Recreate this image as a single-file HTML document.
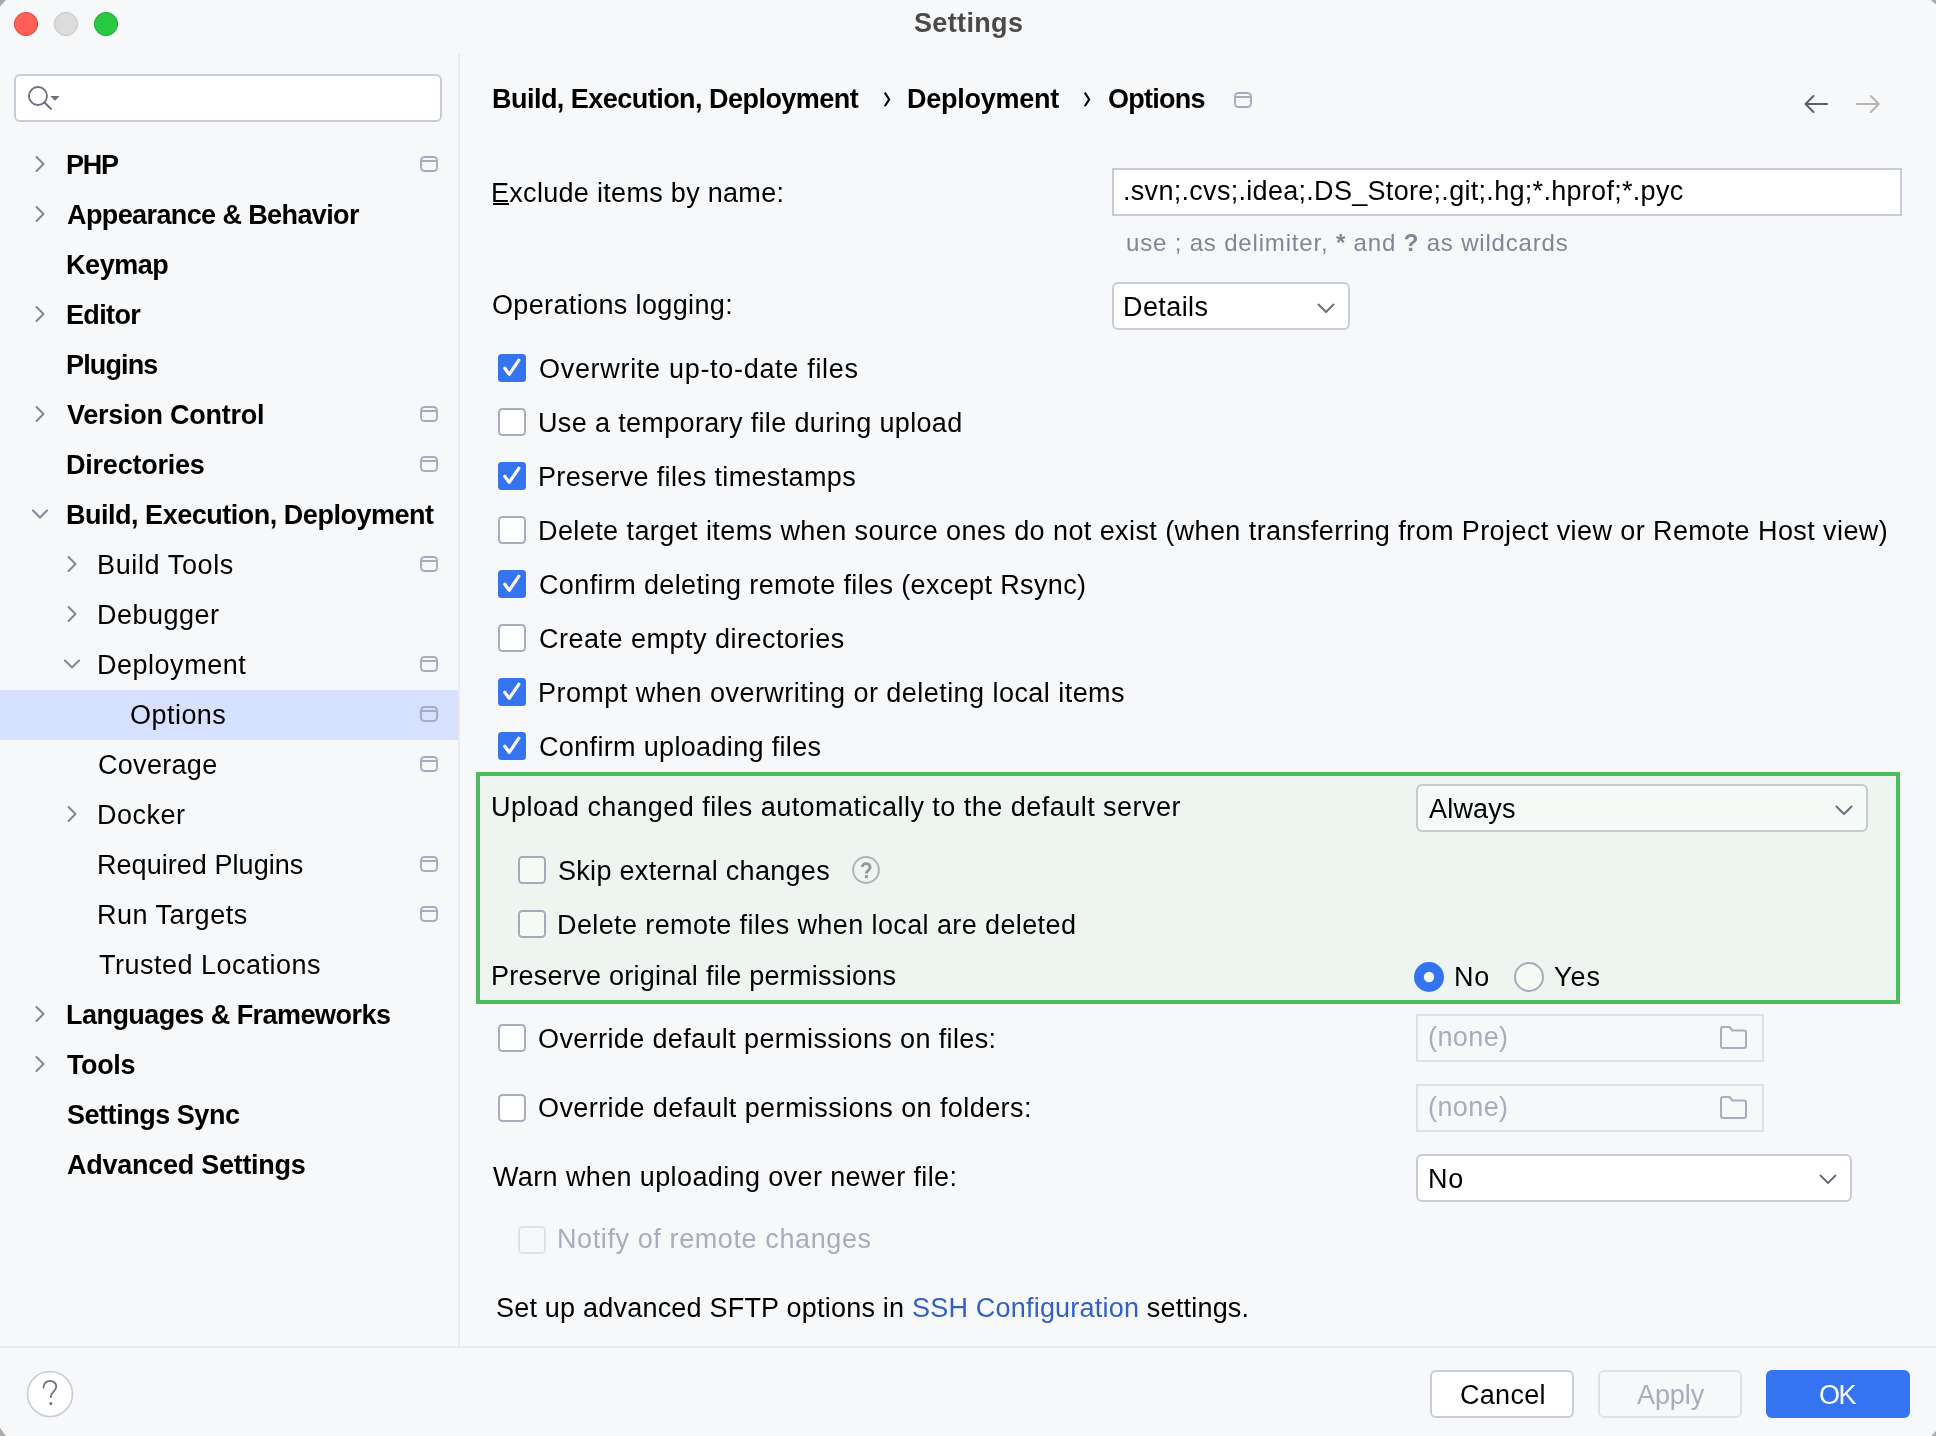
<!DOCTYPE html><html><head><meta charset="utf-8"><style>
html,body{margin:0;padding:0;}
body{width:1936px;height:1436px;position:relative;overflow:hidden;background:#F7F8FA;font-family:"Liberation Sans", sans-serif;}
.t{position:absolute;white-space:pre;line-height:normal;will-change:transform;}
</style></head><body>
<svg style="position:absolute;left:0px;top:0px" width="8" height="8" viewBox="0 0 8 8"><path d="M0 0 L6 0 L0 6.5 Z" fill="#ababab"/></svg>
<svg style="position:absolute;left:1928px;top:0px" width="8" height="8" viewBox="0 0 8 8"><path d="M2.5 0 L8 0 L8 4.5 Z" fill="#ababab"/></svg>
<svg style="position:absolute;left:0px;top:1428px" width="8" height="8" viewBox="0 0 8 8"><path d="M0 0 L6 8 L0 8 Z" fill="#ababab"/></svg>
<svg style="position:absolute;left:1928px;top:1428px" width="8" height="8" viewBox="0 0 8 8"><path d="M8 3 L8 8 L3.5 8 Z" fill="#ababab"/></svg>
<svg style="position:absolute;left:13px;top:11px" width="26" height="26" viewBox="0 0 26 26"><circle cx="13" cy="13" r="11.6" fill="#FF5F57" stroke="#E2463F" stroke-width="1"/></svg>
<svg style="position:absolute;left:53px;top:11px" width="26" height="26" viewBox="0 0 26 26"><circle cx="13" cy="13" r="11.6" fill="#DCDCDC" stroke="#C6C6C6" stroke-width="1"/></svg>
<svg style="position:absolute;left:93px;top:11px" width="26" height="26" viewBox="0 0 26 26"><circle cx="13" cy="13" r="11.6" fill="#28C840" stroke="#1EAA32" stroke-width="1"/></svg>
<div style="position:absolute;left:458px;top:54px;width:2px;height:1292px;box-sizing:border-box;background:#EAEBEF"></div>
<div style="position:absolute;left:0px;top:1346px;width:1936px;height:2px;box-sizing:border-box;background:#EAEBEF"></div>
<div style="position:absolute;left:14px;top:74px;width:428px;height:48px;box-sizing:border-box;background:#FFFFFF;border:2px solid #C9CCD6;border-radius:6px"></div>
<svg style="position:absolute;left:24px;top:82px" width="40" height="32" viewBox="0 0 40 32"><circle cx="14" cy="14" r="9" fill="none" stroke="#6C707E" stroke-width="1.8"/><line x1="20.5" y1="20.5" x2="27" y2="27" stroke="#6C707E" stroke-width="1.9" stroke-linecap="round"/><path d="M26.3 14.1 L35.7 14.1 L31 18.8 Z" fill="#6C707E"/></svg>
<div style="position:absolute;left:0px;top:690px;width:458px;height:50px;box-sizing:border-box;background:#D5E1FF"></div>
<svg style="position:absolute;left:31.5px;top:154px" width="16" height="20" viewBox="0 0 16 20"><path d="M4.5 3 L11.5 10 L4.5 17" fill="none" stroke="#818594" stroke-width="2" stroke-linecap="round" stroke-linejoin="round"/></svg>
<svg style="position:absolute;left:420px;top:156px" width="18" height="16" viewBox="0 0 18 16"><rect x="1" y="1" width="16" height="14" rx="3.5" fill="none" stroke="#A8ADBD" stroke-width="2"/><line x1="1" y1="5" x2="17" y2="5" stroke="#A8ADBD" stroke-width="2"/></svg>
<svg style="position:absolute;left:31.5px;top:204px" width="16" height="20" viewBox="0 0 16 20"><path d="M4.5 3 L11.5 10 L4.5 17" fill="none" stroke="#818594" stroke-width="2" stroke-linecap="round" stroke-linejoin="round"/></svg>
<svg style="position:absolute;left:31.5px;top:304px" width="16" height="20" viewBox="0 0 16 20"><path d="M4.5 3 L11.5 10 L4.5 17" fill="none" stroke="#818594" stroke-width="2" stroke-linecap="round" stroke-linejoin="round"/></svg>
<svg style="position:absolute;left:31.5px;top:404px" width="16" height="20" viewBox="0 0 16 20"><path d="M4.5 3 L11.5 10 L4.5 17" fill="none" stroke="#818594" stroke-width="2" stroke-linecap="round" stroke-linejoin="round"/></svg>
<svg style="position:absolute;left:420px;top:406px" width="18" height="16" viewBox="0 0 18 16"><rect x="1" y="1" width="16" height="14" rx="3.5" fill="none" stroke="#A8ADBD" stroke-width="2"/><line x1="1" y1="5" x2="17" y2="5" stroke="#A8ADBD" stroke-width="2"/></svg>
<svg style="position:absolute;left:420px;top:456px" width="18" height="16" viewBox="0 0 18 16"><rect x="1" y="1" width="16" height="14" rx="3.5" fill="none" stroke="#A8ADBD" stroke-width="2"/><line x1="1" y1="5" x2="17" y2="5" stroke="#A8ADBD" stroke-width="2"/></svg>
<svg style="position:absolute;left:30.0px;top:506px" width="20" height="16" viewBox="0 0 20 16"><path d="M3 4.5 L10 11.5 L17 4.5" fill="none" stroke="#818594" stroke-width="2" stroke-linecap="round" stroke-linejoin="round"/></svg>
<svg style="position:absolute;left:63.5px;top:554px" width="16" height="20" viewBox="0 0 16 20"><path d="M4.5 3 L11.5 10 L4.5 17" fill="none" stroke="#818594" stroke-width="2" stroke-linecap="round" stroke-linejoin="round"/></svg>
<svg style="position:absolute;left:420px;top:556px" width="18" height="16" viewBox="0 0 18 16"><rect x="1" y="1" width="16" height="14" rx="3.5" fill="none" stroke="#A8ADBD" stroke-width="2"/><line x1="1" y1="5" x2="17" y2="5" stroke="#A8ADBD" stroke-width="2"/></svg>
<svg style="position:absolute;left:63.5px;top:604px" width="16" height="20" viewBox="0 0 16 20"><path d="M4.5 3 L11.5 10 L4.5 17" fill="none" stroke="#818594" stroke-width="2" stroke-linecap="round" stroke-linejoin="round"/></svg>
<svg style="position:absolute;left:62.0px;top:656px" width="20" height="16" viewBox="0 0 20 16"><path d="M3 4.5 L10 11.5 L17 4.5" fill="none" stroke="#818594" stroke-width="2" stroke-linecap="round" stroke-linejoin="round"/></svg>
<svg style="position:absolute;left:420px;top:656px" width="18" height="16" viewBox="0 0 18 16"><rect x="1" y="1" width="16" height="14" rx="3.5" fill="none" stroke="#A8ADBD" stroke-width="2"/><line x1="1" y1="5" x2="17" y2="5" stroke="#A8ADBD" stroke-width="2"/></svg>
<svg style="position:absolute;left:420px;top:706px" width="18" height="16" viewBox="0 0 18 16"><rect x="1" y="1" width="16" height="14" rx="3.5" fill="none" stroke="#A8ADBD" stroke-width="2"/><line x1="1" y1="5" x2="17" y2="5" stroke="#A8ADBD" stroke-width="2"/></svg>
<svg style="position:absolute;left:420px;top:756px" width="18" height="16" viewBox="0 0 18 16"><rect x="1" y="1" width="16" height="14" rx="3.5" fill="none" stroke="#A8ADBD" stroke-width="2"/><line x1="1" y1="5" x2="17" y2="5" stroke="#A8ADBD" stroke-width="2"/></svg>
<svg style="position:absolute;left:63.5px;top:804px" width="16" height="20" viewBox="0 0 16 20"><path d="M4.5 3 L11.5 10 L4.5 17" fill="none" stroke="#818594" stroke-width="2" stroke-linecap="round" stroke-linejoin="round"/></svg>
<svg style="position:absolute;left:420px;top:856px" width="18" height="16" viewBox="0 0 18 16"><rect x="1" y="1" width="16" height="14" rx="3.5" fill="none" stroke="#A8ADBD" stroke-width="2"/><line x1="1" y1="5" x2="17" y2="5" stroke="#A8ADBD" stroke-width="2"/></svg>
<svg style="position:absolute;left:420px;top:906px" width="18" height="16" viewBox="0 0 18 16"><rect x="1" y="1" width="16" height="14" rx="3.5" fill="none" stroke="#A8ADBD" stroke-width="2"/><line x1="1" y1="5" x2="17" y2="5" stroke="#A8ADBD" stroke-width="2"/></svg>
<svg style="position:absolute;left:31.5px;top:1004px" width="16" height="20" viewBox="0 0 16 20"><path d="M4.5 3 L11.5 10 L4.5 17" fill="none" stroke="#818594" stroke-width="2" stroke-linecap="round" stroke-linejoin="round"/></svg>
<svg style="position:absolute;left:31.5px;top:1054px" width="16" height="20" viewBox="0 0 16 20"><path d="M4.5 3 L11.5 10 L4.5 17" fill="none" stroke="#818594" stroke-width="2" stroke-linecap="round" stroke-linejoin="round"/></svg>
<svg style="position:absolute;left:882.6px;top:92px" width="10" height="15" viewBox="0 0 10 15"><path d="M1.8 0.6 L6.2 7.4 L1.8 14.2" fill="none" stroke="#000" stroke-width="2.1" stroke-linecap="butt" stroke-linejoin="miter"/></svg>
<svg style="position:absolute;left:1082.6px;top:92px" width="10" height="15" viewBox="0 0 10 15"><path d="M1.8 0.6 L6.2 7.4 L1.8 14.2" fill="none" stroke="#000" stroke-width="2.1" stroke-linecap="butt" stroke-linejoin="miter"/></svg>
<svg style="position:absolute;left:1234px;top:92px" width="18" height="16" viewBox="0 0 18 16"><rect x="1" y="1" width="16" height="14" rx="3.5" fill="none" stroke="#A8ADBD" stroke-width="2"/><line x1="1" y1="5" x2="17" y2="5" stroke="#A8ADBD" stroke-width="2"/></svg>
<svg style="position:absolute;left:1802px;top:94px" width="28" height="20" viewBox="0 0 28 20"><path d="M3.5 10 L25 10 M11.5 2 L3.5 10 L11.5 18" fill="none" stroke="#5A5D6B" stroke-width="2" stroke-linecap="round" stroke-linejoin="round"/></svg>
<svg style="position:absolute;left:1854px;top:94px" width="28" height="20" viewBox="0 0 28 20"><path d="M24.8 10 L3 10 M16.8 2 L24.8 10 L16.8 18" fill="none" stroke="#B5B5B5" stroke-width="2" stroke-linecap="round" stroke-linejoin="round"/></svg>
<div style="position:absolute;left:1112px;top:168px;width:790px;height:48px;box-sizing:border-box;background:#FFFFFF;border:2px solid #C9CCD6"></div>
<div style="position:absolute;left:493px;top:203px;width:16px;height:2px;box-sizing:border-box;background:#000"></div>
<div style="position:absolute;left:1112px;top:282px;width:238px;height:48px;box-sizing:border-box;background:#FFFFFF;border:2px solid #C9CCD6;border-radius:6px"></div>
<svg style="position:absolute;left:1317px;top:303px" width="18" height="11" viewBox="0 0 18 11"><path d="M1.5 1.5 L9 9 L16.5 1.5" fill="none" stroke="#6C707E" stroke-width="2" stroke-linecap="round" stroke-linejoin="round"/></svg>
<svg style="position:absolute;left:498px;top:354px" width="28" height="28" viewBox="0 0 28 28"><rect x="0" y="0" width="28" height="28" rx="3.5" fill="#3574F0"/><path d="M6.8 14.3 L11.2 20.4 L20.8 6.3" fill="none" stroke="#FFFFFF" stroke-width="3.2" stroke-linecap="round" stroke-linejoin="round"/></svg>
<svg style="position:absolute;left:498px;top:408px" width="28" height="28" viewBox="0 0 28 28"><rect x="1" y="1" width="26" height="26" rx="3.5" fill="#FFFFFF" stroke="#A8ADBD" stroke-width="2"/></svg>
<svg style="position:absolute;left:498px;top:462px" width="28" height="28" viewBox="0 0 28 28"><rect x="0" y="0" width="28" height="28" rx="3.5" fill="#3574F0"/><path d="M6.8 14.3 L11.2 20.4 L20.8 6.3" fill="none" stroke="#FFFFFF" stroke-width="3.2" stroke-linecap="round" stroke-linejoin="round"/></svg>
<svg style="position:absolute;left:498px;top:516px" width="28" height="28" viewBox="0 0 28 28"><rect x="1" y="1" width="26" height="26" rx="3.5" fill="#FFFFFF" stroke="#A8ADBD" stroke-width="2"/></svg>
<svg style="position:absolute;left:498px;top:570px" width="28" height="28" viewBox="0 0 28 28"><rect x="0" y="0" width="28" height="28" rx="3.5" fill="#3574F0"/><path d="M6.8 14.3 L11.2 20.4 L20.8 6.3" fill="none" stroke="#FFFFFF" stroke-width="3.2" stroke-linecap="round" stroke-linejoin="round"/></svg>
<svg style="position:absolute;left:498px;top:624px" width="28" height="28" viewBox="0 0 28 28"><rect x="1" y="1" width="26" height="26" rx="3.5" fill="#FFFFFF" stroke="#A8ADBD" stroke-width="2"/></svg>
<svg style="position:absolute;left:498px;top:678px" width="28" height="28" viewBox="0 0 28 28"><rect x="0" y="0" width="28" height="28" rx="3.5" fill="#3574F0"/><path d="M6.8 14.3 L11.2 20.4 L20.8 6.3" fill="none" stroke="#FFFFFF" stroke-width="3.2" stroke-linecap="round" stroke-linejoin="round"/></svg>
<svg style="position:absolute;left:498px;top:732px" width="28" height="28" viewBox="0 0 28 28"><rect x="0" y="0" width="28" height="28" rx="3.5" fill="#3574F0"/><path d="M6.8 14.3 L11.2 20.4 L20.8 6.3" fill="none" stroke="#FFFFFF" stroke-width="3.2" stroke-linecap="round" stroke-linejoin="round"/></svg>
<div style="position:absolute;left:476px;top:772px;width:1424px;height:232px;box-sizing:border-box;background:#EEF4F0;border:4px solid #4CBB5F"></div>
<div style="position:absolute;left:1416px;top:784px;width:452px;height:48px;box-sizing:border-box;background:#F5FAF6;border:2px solid #C3CAD0;border-radius:6px"></div>
<svg style="position:absolute;left:1835px;top:805px" width="18" height="11" viewBox="0 0 18 11"><path d="M1.5 1.5 L9 9 L16.5 1.5" fill="none" stroke="#6C707E" stroke-width="2" stroke-linecap="round" stroke-linejoin="round"/></svg>
<svg style="position:absolute;left:518px;top:856px" width="28" height="28" viewBox="0 0 28 28"><rect x="1" y="1" width="26" height="26" rx="3.5" fill="#F5FAF6" stroke="#A3ABB8" stroke-width="2"/></svg>
<svg style="position:absolute;left:518px;top:910px" width="28" height="28" viewBox="0 0 28 28"><rect x="1" y="1" width="26" height="26" rx="3.5" fill="#F5FAF6" stroke="#A3ABB8" stroke-width="2"/></svg>
<svg style="position:absolute;left:852px;top:856px" width="28" height="28" viewBox="0 0 28 28"><circle cx="14" cy="14" r="12.9" fill="none" stroke="#A9B5B8" stroke-width="2"/><path d="M10.4 11 C10.4 8.9 12 7.6 14.1 7.6 C16.3 7.6 18.1 9 18.1 11.2 C18.1 14.2 14.4 14.8 14.4 17.6" fill="none" stroke="#8E9A9E" stroke-width="2.9"/><rect x="12.9" y="19.2" width="3" height="2.9" fill="#8E9A9E"/></svg>
<svg style="position:absolute;left:1414px;top:962px" width="30" height="30" viewBox="0 0 30 30"><circle cx="15" cy="15" r="15" fill="#3574F0"/><circle cx="15" cy="15" r="5.2" fill="#F5FAF6"/></svg>
<svg style="position:absolute;left:1514px;top:962px" width="30" height="30" viewBox="0 0 30 30"><circle cx="15" cy="15" r="14" fill="#F5FAF6" stroke="#A3ABB8" stroke-width="2"/></svg>
<svg style="position:absolute;left:498px;top:1024px" width="28" height="28" viewBox="0 0 28 28"><rect x="1" y="1" width="26" height="26" rx="3.5" fill="#FFFFFF" stroke="#A8ADBD" stroke-width="2"/></svg>
<svg style="position:absolute;left:498px;top:1094px" width="28" height="28" viewBox="0 0 28 28"><rect x="1" y="1" width="26" height="26" rx="3.5" fill="#FFFFFF" stroke="#A8ADBD" stroke-width="2"/></svg>
<div style="position:absolute;left:1416px;top:1014px;width:348px;height:48px;box-sizing:border-box;border:2px solid #DFE1E5"></div>
<svg style="position:absolute;left:1719px;top:1025px" width="30" height="25" viewBox="0 0 30 25"><path d="M2 4 C2 2.9 2.9 2 4 2 L10.5 2 L13.5 5.5 L25 5.5 C26.1 5.5 27 6.4 27 7.5 L27 21 C27 22.1 26.1 23 25 23 L4 23 C2.9 23 2 22.1 2 21 Z" fill="none" stroke="#A8ADBD" stroke-width="2" stroke-linejoin="round"/></svg>
<div style="position:absolute;left:1416px;top:1084px;width:348px;height:48px;box-sizing:border-box;border:2px solid #DFE1E5"></div>
<svg style="position:absolute;left:1719px;top:1095px" width="30" height="25" viewBox="0 0 30 25"><path d="M2 4 C2 2.9 2.9 2 4 2 L10.5 2 L13.5 5.5 L25 5.5 C26.1 5.5 27 6.4 27 7.5 L27 21 C27 22.1 26.1 23 25 23 L4 23 C2.9 23 2 22.1 2 21 Z" fill="none" stroke="#A8ADBD" stroke-width="2" stroke-linejoin="round"/></svg>
<div style="position:absolute;left:1416px;top:1154px;width:436px;height:48px;box-sizing:border-box;background:#FFFFFF;border:2px solid #C9CCD6;border-radius:6px"></div>
<svg style="position:absolute;left:1819px;top:1174px" width="18" height="11" viewBox="0 0 18 11"><path d="M1.5 1.5 L9 9 L16.5 1.5" fill="none" stroke="#6C707E" stroke-width="2" stroke-linecap="round" stroke-linejoin="round"/></svg>
<svg style="position:absolute;left:518px;top:1226px" width="28" height="28" viewBox="0 0 28 28"><rect x="1" y="1" width="26" height="26" rx="3.5" fill="#F7F8FA" stroke="#DFE1E5" stroke-width="2"/></svg>
<svg style="position:absolute;left:26px;top:1370px" width="48" height="48" viewBox="0 0 48 48"><circle cx="24" cy="24" r="22.5" fill="#FFFFFF" stroke="#C9CCD6" stroke-width="1.6"/><path d="M17.5 17.5 C17.5 13.5 20.5 10.8 24 10.8 C27.5 10.8 30.3 13.3 30.3 16.8 C30.3 21 24.8 21.8 24.8 27" fill="none" stroke="#6C707E" stroke-width="1.8" stroke-linecap="round"/><circle cx="24.8" cy="33.5" r="1.5" fill="#6C707E"/></svg>
<div style="position:absolute;left:1430px;top:1370px;width:144px;height:48px;box-sizing:border-box;background:#FFFFFF;border:2px solid #C9CCD6;border-radius:6px"></div>
<div style="position:absolute;left:1598px;top:1370px;width:144px;height:48px;box-sizing:border-box;border:2px solid #DFE1E5;border-radius:6px"></div>
<div style="position:absolute;left:1766px;top:1370px;width:144px;height:48px;box-sizing:border-box;background:#3574F0;border-radius:6px"></div>
<div id="t0" class="t" style="left:914.00px;top:8.00px;font-size:27px;font-weight:700;letter-spacing:0.345px;color:#4A4A4A">Settings</div>
<div id="t1" class="t" style="left:66.00px;top:150.00px;font-size:27px;font-weight:700;letter-spacing:-1.250px;color:#000000">PHP</div>
<div id="t2" class="t" style="left:67.00px;top:200.00px;font-size:27px;font-weight:700;letter-spacing:-0.605px;color:#000000">Appearance &amp; Behavior</div>
<div id="t3" class="t" style="left:66.00px;top:250.00px;font-size:27px;font-weight:700;letter-spacing:-0.440px;color:#000000">Keymap</div>
<div id="t4" class="t" style="left:66.00px;top:300.00px;font-size:27px;font-weight:700;letter-spacing:-0.640px;color:#000000">Editor</div>
<div id="t5" class="t" style="left:66.00px;top:350.00px;font-size:27px;font-weight:700;letter-spacing:-0.867px;color:#000000">Plugins</div>
<div id="t6" class="t" style="left:67.00px;top:400.00px;font-size:27px;font-weight:700;letter-spacing:-0.243px;color:#000000">Version Control</div>
<div id="t7" class="t" style="left:66.00px;top:450.00px;font-size:27px;font-weight:700;letter-spacing:-0.220px;color:#000000">Directories</div>
<div id="t8" class="t" style="left:66.00px;top:500.00px;font-size:27px;font-weight:700;letter-spacing:-0.483px;color:#000000">Build, Execution, Deployment</div>
<div id="t9" class="t" style="left:97.00px;top:550.00px;font-size:27px;font-weight:400;letter-spacing:0.620px;color:#000000">Build Tools</div>
<div id="t10" class="t" style="left:97.00px;top:600.00px;font-size:27px;font-weight:400;letter-spacing:0.472px;color:#000000">Debugger</div>
<div id="t11" class="t" style="left:97.00px;top:650.00px;font-size:27px;font-weight:400;letter-spacing:0.514px;color:#000000">Deployment</div>
<div id="t12" class="t" style="left:130.00px;top:700.00px;font-size:27px;font-weight:400;letter-spacing:0.467px;color:#000000">Options</div>
<div id="t13" class="t" style="left:98.00px;top:750.00px;font-size:27px;font-weight:400;letter-spacing:0.300px;color:#000000">Coverage</div>
<div id="t14" class="t" style="left:97.00px;top:800.00px;font-size:27px;font-weight:400;letter-spacing:0.500px;color:#000000">Docker</div>
<div id="t15" class="t" style="left:97.00px;top:850.00px;font-size:27px;font-weight:400;letter-spacing:0.046px;color:#000000">Required Plugins</div>
<div id="t16" class="t" style="left:97.00px;top:900.00px;font-size:27px;font-weight:400;letter-spacing:0.510px;color:#000000">Run Targets</div>
<div id="t17" class="t" style="left:99.00px;top:950.00px;font-size:27px;font-weight:400;letter-spacing:0.488px;color:#000000">Trusted Locations</div>
<div id="t18" class="t" style="left:66.00px;top:1000.00px;font-size:27px;font-weight:700;letter-spacing:-0.532px;color:#000000">Languages &amp; Frameworks</div>
<div id="t19" class="t" style="left:67.00px;top:1050.00px;font-size:27px;font-weight:700;letter-spacing:-0.400px;color:#000000">Tools</div>
<div id="t20" class="t" style="left:67.00px;top:1100.00px;font-size:27px;font-weight:700;letter-spacing:-0.467px;color:#000000">Settings Sync</div>
<div id="t21" class="t" style="left:67.00px;top:1150.00px;font-size:27px;font-weight:700;letter-spacing:-0.265px;color:#000000">Advanced Settings</div>
<div id="t22" class="t" style="left:492.00px;top:84.00px;font-size:27px;font-weight:700;letter-spacing:-0.529px;color:#000000">Build, Execution, Deployment</div>
<div id="t23" class="t" style="left:907.00px;top:84.00px;font-size:27px;font-weight:700;letter-spacing:-0.258px;color:#000000">Deployment</div>
<div id="t24" class="t" style="left:1108.00px;top:84.00px;font-size:27px;font-weight:700;letter-spacing:-0.750px;color:#000000">Options</div>
<div id="t25" class="t" style="left:491.00px;top:178.00px;font-size:27px;font-weight:400;letter-spacing:0.303px;color:#000000">Exclude items by name:</div>
<div id="t26" class="t" style="left:1123.00px;top:176.00px;font-size:27px;font-weight:400;letter-spacing:0.297px;color:#000000">.svn;.cvs;.idea;.DS_Store;.git;.hg;*.hprof;*.pyc</div>
<div id="t27" class="t" style="left:1126.00px;top:229.00px;font-size:24px;font-weight:400;letter-spacing:0.826px;color:#818594">use ; as delimiter, <b>*</b> and <b>?</b> as wildcards</div>
<div id="t28" class="t" style="left:492.00px;top:290.00px;font-size:27px;font-weight:400;letter-spacing:0.360px;color:#000000">Operations logging:</div>
<div id="t29" class="t" style="left:1123.00px;top:292.00px;font-size:27px;font-weight:400;letter-spacing:0.416px;color:#000000">Details</div>
<div id="t30" class="t" style="left:539.00px;top:354.00px;font-size:27px;font-weight:400;letter-spacing:0.696px;color:#000000">Overwrite up-to-date files</div>
<div id="t31" class="t" style="left:538.00px;top:408.00px;font-size:27px;font-weight:400;letter-spacing:0.349px;color:#000000">Use a temporary file during upload</div>
<div id="t32" class="t" style="left:538.00px;top:462.00px;font-size:27px;font-weight:400;letter-spacing:0.357px;color:#000000">Preserve files timestamps</div>
<div id="t33" class="t" style="left:538.00px;top:516.00px;font-size:27px;font-weight:400;letter-spacing:0.417px;color:#000000">Delete target items when source ones do not exist (when transferring from Project view or Remote Host view)</div>
<div id="t34" class="t" style="left:539.00px;top:570.00px;font-size:27px;font-weight:400;letter-spacing:0.369px;color:#000000">Confirm deleting remote files (except Rsync)</div>
<div id="t35" class="t" style="left:539.00px;top:624.00px;font-size:27px;font-weight:400;letter-spacing:0.489px;color:#000000">Create empty directories</div>
<div id="t36" class="t" style="left:538.00px;top:678.00px;font-size:27px;font-weight:400;letter-spacing:0.452px;color:#000000">Prompt when overwriting or deleting local items</div>
<div id="t37" class="t" style="left:539.00px;top:732.00px;font-size:27px;font-weight:400;letter-spacing:0.337px;color:#000000">Confirm uploading files</div>
<div id="t38" class="t" style="left:491.00px;top:792.00px;font-size:27px;font-weight:400;letter-spacing:0.475px;color:#000000">Upload changed files automatically to the default server</div>
<div id="t39" class="t" style="left:1429.00px;top:794.00px;font-size:27px;font-weight:400;letter-spacing:0.200px;color:#000000">Always</div>
<div id="t40" class="t" style="left:558.00px;top:856.00px;font-size:27px;font-weight:400;letter-spacing:0.300px;color:#000000">Skip external changes</div>
<div id="t41" class="t" style="left:557.00px;top:910.00px;font-size:27px;font-weight:400;letter-spacing:0.394px;color:#000000">Delete remote files when local are deleted</div>
<div id="t42" class="t" style="left:491.00px;top:961.00px;font-size:27px;font-weight:400;letter-spacing:0.267px;color:#000000">Preserve original file permissions</div>
<div id="t43" class="t" style="left:1454.00px;top:962.00px;font-size:27px;font-weight:400;letter-spacing:0.800px;color:#000000">No</div>
<div id="t44" class="t" style="left:1554.00px;top:962.00px;font-size:27px;font-weight:400;letter-spacing:1.000px;color:#000000">Yes</div>
<div id="t45" class="t" style="left:538.00px;top:1024.00px;font-size:27px;font-weight:400;letter-spacing:0.376px;color:#000000">Override default permissions on files:</div>
<div id="t46" class="t" style="left:1428.00px;top:1022.00px;font-size:27px;font-weight:400;letter-spacing:0.400px;color:#A8ADBD">(none)</div>
<div id="t47" class="t" style="left:538.00px;top:1093.00px;font-size:27px;font-weight:400;letter-spacing:0.415px;color:#000000">Override default permissions on folders:</div>
<div id="t48" class="t" style="left:1428.00px;top:1092.00px;font-size:27px;font-weight:400;letter-spacing:0.400px;color:#A8ADBD">(none)</div>
<div id="t49" class="t" style="left:493.00px;top:1162.00px;font-size:27px;font-weight:400;letter-spacing:0.378px;color:#000000">Warn when uploading over newer file:</div>
<div id="t50" class="t" style="left:1427.80px;top:1164.00px;font-size:27px;font-weight:400;letter-spacing:0.700px;color:#000000">No</div>
<div id="t51" class="t" style="left:557.00px;top:1224.00px;font-size:27px;font-weight:400;letter-spacing:0.602px;color:#A8ADBD">Notify of remote changes</div>
<div id="t52" class="t" style="left:496.00px;top:1293.00px;font-size:27px;font-weight:400;letter-spacing:0.209px;color:#000000">Set up advanced SFTP options in <span style="color:#3361C2">SSH Configuration</span> settings.</div>
<div id="t53" class="t" style="left:1460.00px;top:1380.00px;font-size:27px;font-weight:400;letter-spacing:0.300px;color:#000000">Cancel</div>
<div id="t54" class="t" style="left:1637.00px;top:1380.00px;font-size:27px;font-weight:400;letter-spacing:-0.100px;color:#A8ADBD">Apply</div>
<div id="t55" class="t" style="left:1819.00px;top:1380.00px;font-size:27px;font-weight:400;letter-spacing:-1.600px;color:#FFFFFF">OK</div>
</body></html>
